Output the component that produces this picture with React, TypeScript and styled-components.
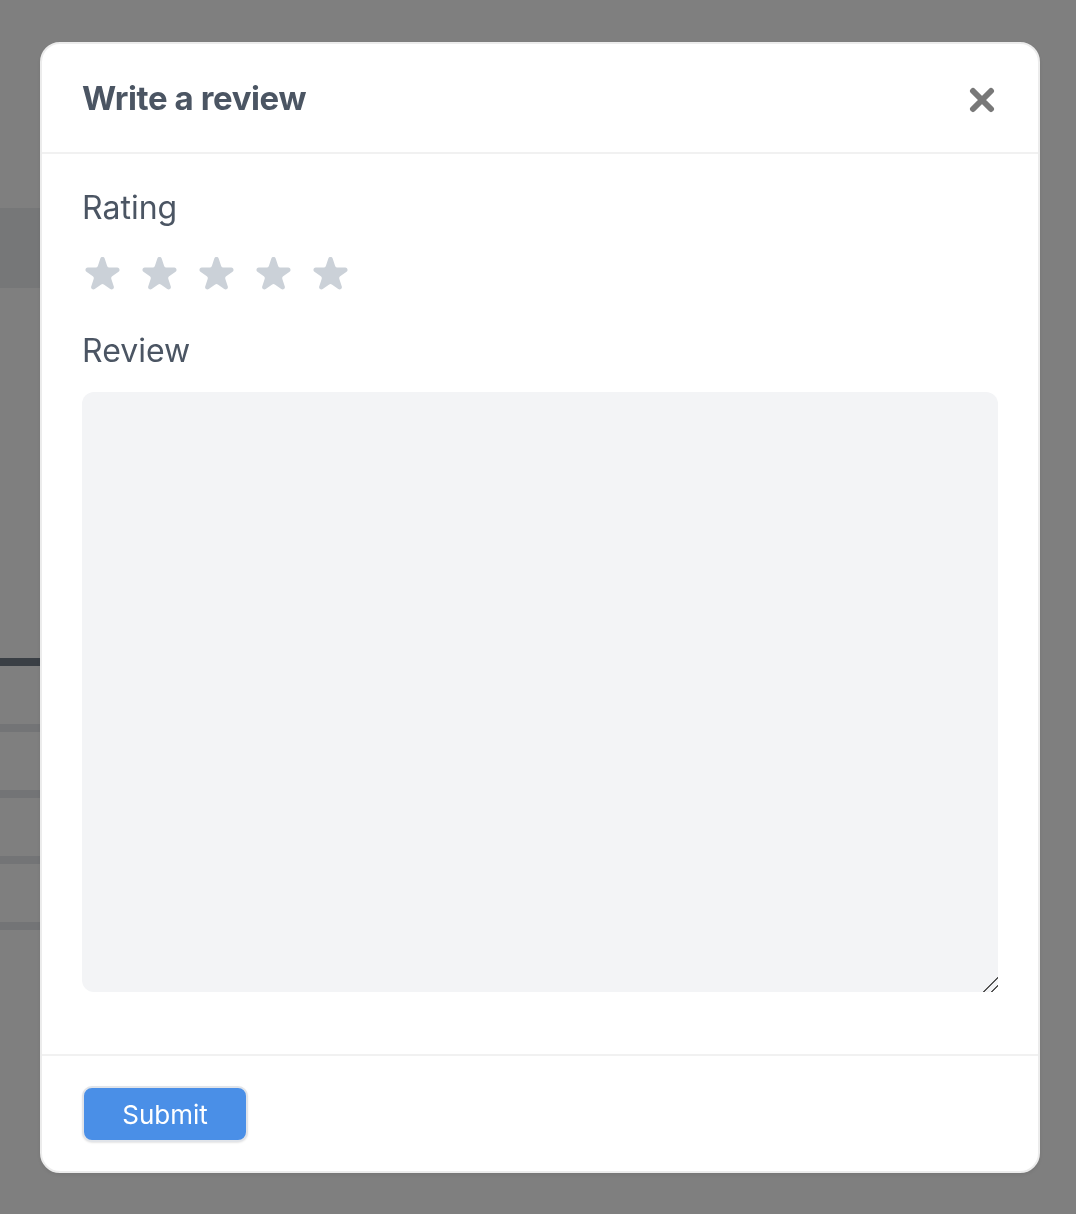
import React, { useState } from "react";
import styled, { createGlobalStyle } from "styled-components";

const GlobalStyle = createGlobalStyle`
  * {
    box-sizing: border-box;
  }
  body {
    margin: 0;
    font-family: Inter, "Noto Sans", "Liberation Sans", sans-serif;
    background: #fff;
  }
`;

function StarIcon() {
  return (
    <svg width="35" height="33" viewBox="2.4 2.3 15.2 14.4" aria-hidden="true">
      <path
        fill="currentColor"
        d="M9.049 2.927c.3-.921 1.603-.921 1.902 0l1.07 3.292a1 1 0 00.95.69h3.462c.969 0 1.371 1.24.588 1.81l-2.8 2.034a1 1 0 00-.364 1.118l1.07 3.292c.3.921-.755 1.688-1.54 1.118l-2.8-2.034a1 1 0 00-1.175 0l-2.8 2.034c-.784.57-1.838-.197-1.539-1.118l1.07-3.292a1 1 0 00-.364-1.118L2.98 8.72c-.783-.57-.38-1.81.588-1.81h3.461a1 1 0 00.951-.69l1.07-3.292z"
      />
    </svg>
  );
}

function CloseIcon() {
  return (
    <svg width="26" height="26" viewBox="0 0 26 26" aria-hidden="true">
      <path
        d="M4 4 L22 22 M22 4 L4 22"
        stroke="currentColor"
        strokeWidth="6"
        strokeLinecap="round"
      />
    </svg>
  );
}

export default function App() {
  const [rating, setRating] = useState(0);
  const [review, setReview] = useState("");

  return (
    <>
      <GlobalStyle />
      {/* page behind the modal */}
      <Page>
        <Banner />
        <TabLine />
        {[0, 1, 2, 3].map((i) => (
          <ListRow key={i} />
        ))}
      </Page>

      <Overlay>
        <Modal>
          <Header>
            <Title>Write a review</Title>
            <CloseButton aria-label="Close">
              <CloseIcon />
            </CloseButton>
          </Header>

          <Body>
            <Label>Rating</Label>
            <Stars>
              {[1, 2, 3, 4, 5].map((n) => (
                <StarButton
                  key={n}
                  active={n <= rating}
                  onClick={() => setRating(n)}
                  aria-label={`${n} star`}
                >
                  <StarIcon />
                </StarButton>
              ))}
            </Stars>

            <ReviewLabel>Review</ReviewLabel>
            <TextArea
              value={review}
              onChange={(e) => setReview(e.target.value)}
            />
          </Body>

          <Footer>
            <SubmitButton>Submit</SubmitButton>
          </Footer>
        </Modal>
      </Overlay>
    </>
  );
}

const Page = styled.div`
  width: 600px;
  padding-top: 208px;
`;

const Banner = styled.div`
  height: 80px;
  background: #eceef1;
  margin-bottom: 370px;
`;

const TabLine = styled.div`
  height: 8px;
  background: #747e8b;
`;

const ListRow = styled.div`
  height: 66px;
  border-bottom: 8px solid #e6e9ec;
`;

const Overlay = styled.div`
  position: fixed;
  inset: 0;
  background: rgba(0, 0, 0, 0.5);
  padding: 42px 0 0 40px;
`;

const Modal = styled.div`
  width: 1000px;
  background: #fff;
  border: 2px solid #ececec;
  border-radius: 20px;
  box-shadow: 0 2px 4px rgba(0, 0, 0, 0.08);
  display: flex;
  flex-direction: column;
`;

const Header = styled.div`
  height: 110px;
  display: flex;
  align-items: center;
  justify-content: space-between;
  padding: 0 43px 0 40px;
  border-bottom: 2px solid #f1f1f1;
`;

const Title = styled.h2`
  margin: 0;
  font-size: 33px;
  font-weight: 700;
  letter-spacing: -0.4px;
  color: #4b5563;
`;

const CloseButton = styled.button`
  border: none;
  background: none;
  padding: 0;
  margin-top: 4px;
  color: #787878;
  display: flex;
  cursor: pointer;
`;

const Body = styled.div`
  padding: 30px 40px 62px;
  display: flex;
  flex-direction: column;
`;

const Label = styled.label`
  font-size: 32px;
  line-height: 48px;
  color: #4b5563;
`;

const ReviewLabel = styled(Label)`
  margin-top: 37px;
`;

const Stars = styled.div`
  display: flex;
  gap: 22px;
  margin-top: 25px;
  padding-left: 3px;
`;

const StarButton = styled.button<{ active: boolean }>`
  border: none;
  background: none;
  padding: 0;
  display: flex;
  color: ${(p) => (p.active ? "#f5b301" : "#cbd1d8")};
  cursor: pointer;
`;

const TextArea = styled.textarea`
  margin-top: 17px;
  width: 100%;
  height: 600px;
  border: none;
  outline: none;
  border-radius: 12px;
  background: #f3f4f6;
  padding: 16px;
  font-family: inherit;
  font-size: 28px;
  color: #374151;

  &::-webkit-resizer {
    width: 18px;
    height: 18px;
    background: linear-gradient(
      135deg,
      transparent 0 47%,
      #555 47% 55%,
      transparent 55% 74%,
      #555 74% 82%,
      transparent 82%
    );
  }
`;

const Footer = styled.div`
  border-top: 2px solid #f1f1f1;
  padding: 30px 40px 29px;
`;

const SubmitButton = styled.button`
  width: 166px;
  height: 56px;
  border: 2px solid #e1e4e9;
  border-radius: 10px;
  background: #4a8fe7;
  color: #fff;
  font-family: Inter, "Noto Sans", sans-serif;
  font-size: 26px;
  box-shadow: 0 1px 2px rgba(0, 0, 0, 0.1);
  cursor: pointer;
`;
